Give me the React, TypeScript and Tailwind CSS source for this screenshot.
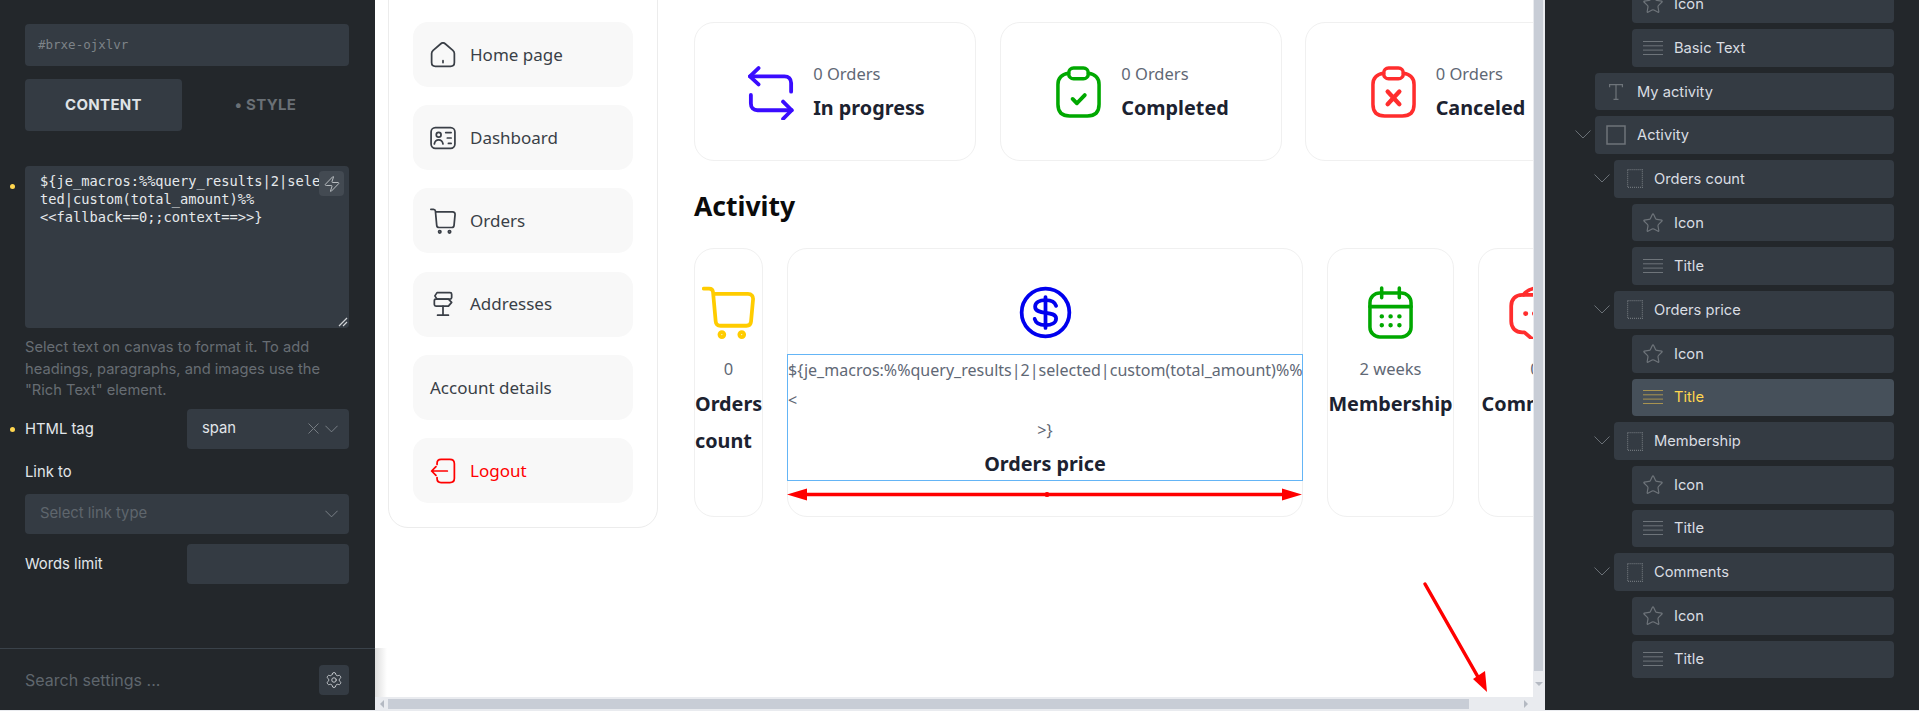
import React from 'react';
import { Settings, Star, Zap } from 'lucide-react';

const bodyFont = "font-['Noto_Sans',sans-serif]";
const panelFont = "font-['Inter',sans-serif]";
const monoFont = "font-['DejaVu_Sans_Mono',monospace]";

type IconProps = { className?: string };

const Svg: React.FC<{ className?: string; sw?: number; box?: string; children: React.ReactNode }> = ({ className, sw = 1.6, box = '0 0 24 24', children }) => (
    <svg viewBox={box} fill="none" stroke="currentColor" strokeWidth={sw} strokeLinecap="round" strokeLinejoin="round" className={className}>
        {children}
    </svg>
);

const HomeIcon = ({ className }: IconProps) => (
    <Svg className={className}>
        <path d="M1.5 10.5c0-1.200.5-2 1.400-2.800L10 1.600c1.200-1 2.800-1 4 0l7.100 6.100c.9.8 1.400 1.600 1.400 2.800V19c0 2.200-1.300 3.500-3.500 3.500H5c-2.200 0-3.500-1.300-3.500-3.500z" />
        <path d="M12 17.200v1.800" />
    </Svg>
);

const IdCardIcon = ({ className }: IconProps) => (
    <Svg className={className}>
        <rect x="1" y="2.500" width="22" height="19" rx="4" />
        <circle cx="8" cy="9" r="2.200" />
        <path d="M4 17.500c.5-2.500 2-3.700 4-3.700s3.500 1.200 4 3.700" />
        <path d="M14.500 7h5M16 12h3.500M17 17h2.500" />
    </Svg>
);

const CartIcon = ({ className, sw = 1.6 }: IconProps & { sw?: number }) => (
    <Svg className={className} sw={sw}>
        <path d="M.8 1.200h2.400c1 0 1.700.6 1.800 1.600l1.200 13.200c.1 1.300 1 2 2.200 2h11.700c1.200 0 2-.7 2.100-1.900l.9-9.800c.2-1.700-.7-2.700-2.300-2.700H5.200" />
        <circle cx="9" cy="22" r="1.100" />
        <circle cx="18" cy="22" r="1.100" />
    </Svg>
);

const SignpostIcon = ({ className }: IconProps) => (
    <Svg className={className}>
        <path d="M6.500 1.500H18.500c1 0 1.500.5 1.500 1.500v3c0 1-.5 1.500-1.500 1.500H6.500L4.500 4.500z" />
        <path d="M5.500 7.500h11.500l3 3-3 3.500H5.500c-1 0-1.500-.5-1.500-1.500V9c0-1 .5-1.500 1.500-1.500z" />
        <path d="M12 14v8M7 22.300h10" />
    </Svg>
);

const LogoutIcon = ({ className }: IconProps) => (
    <Svg className={className}>
        <path d="M6.500 6V5c0-2.300 1.500-3.700 3.700-3.700h8.100c2.400 0 4.200 1.500 4.200 4v13.400c0 2.500-1.800 4-4.200 4h-8.100c-2.200 0-3.700-1.400-3.700-3.700v-1" />
        <path d="M16 12H1.500M5.500 8l-4 4 4 4" />
    </Svg>
);

const RepeatIcon = ({ className }: IconProps) => (
    <Svg className={className} sw={2} box="0 0 24 28">
        <path d="M5.500 1 1 5.300l4.500 4.200" />
        <path d="M1 5.300h18c2.200 0 3.500 1.300 3.500 3.500v4.500" />
        <path d="M18.300 18.500l4.500 4.500-4.500 4.500" />
        <path d="M22.800 23H5c-2.200 0-3.500-1.300-3.500-3.500V15" />
    </Svg>
);

const ClipboardIcon = ({ className, children }: IconProps & { children: React.ReactNode }) => (
    <Svg className={className} sw={1.8} box="0 0 24 27">
        <path d="M7 3.700C3.400 4.200 1.500 6 1.500 9.500v10c0 4 2 6 6 6h9c4 0 6-2 6-6v-10c0-3.500-1.900-5.300-5.500-5.800" />
        <rect x="7" y="1" width="10" height="5.500" rx="2.500" />
        {children}
    </Svg>
);

const DollarIcon = ({ className }: IconProps) => (
    <Svg className={className} sw={1.7}>
        <circle cx="12" cy="12" r="10.800" />
        <path d="M16.800 9c-.5-1.700-2.300-2.600-4.800-2.600-2.800 0-4.700 1.100-4.700 3 0 4.200 9.500 1.300 9.500 5.300 0 1.900-2 3-4.800 3-2.700 0-4.400-1-4.900-2.800" />
        <path d="M12 5v14" />
    </Svg>
);

const CalendarIcon = ({ className }: IconProps) => (
    <Svg className={className} sw={1.8} box="0 0 24 27">
        <rect x="1.500" y="3.500" width="21" height="22.500" rx="5" />
        <path d="M1.500 10.500h21M7.500 1v5M16.500 1v5" />
        <path d="M7.500 15.500h.1M12 15.500h.1M16.500 15.500h.1M7.500 20h.1M12 20h.1M16.500 20h.1" strokeWidth={2.2} />
    </Svg>
);

const ChatIcon = ({ className }: IconProps) => (
    <Svg className={className} sw={1.7}>
        <path d="M6.500 4C8 2 10 1 13 1c3 0 5 1 6.500 3" />
        <path d="M6 4h12c3 0 5 2 5 5v7c0 3-2 5-5 5h-2l-3.500 2.500c-.9.6-1.800.6-2.700-.1L7 21H6c-3 0-5-2-5-5V9c0-3 2-5 5-5z" />
        <path d="M7.500 12.500h.1M11.500 12.500h.1M15.500 12.500h.1" strokeWidth={2.2} />
    </Svg>
);

const LinesIcon = ({ className }: IconProps) => (
    <svg viewBox="0 0 20 14" fill="none" stroke="currentColor" strokeWidth="1" className={className}>
        <path d="M0 .5h20M0 4.800h20M0 9.100h20M0 13.500h20" />
    </svg>
);

const DivIcon = ({ className }: IconProps) => (
    <svg viewBox="0 0 16 19" fill="none" stroke="currentColor" strokeWidth="1.2" strokeDasharray="1 1" className={className}>
        <rect x=".6" y=".6" width="14.800" height="17.800" />
    </svg>
);

const BoxIcon = ({ className }: IconProps) => (
    <svg viewBox="0 0 20 20" fill="none" stroke="currentColor" strokeWidth="1.5" className={className}>
        <rect x="1" y="1" width="18" height="18" />
    </svg>
);

const HeadingIcon = ({ className }: IconProps) => (
    <svg viewBox="0 0 14 16" fill="none" stroke="currentColor" strokeWidth="1.2" className={className}>
        <path d="M.6 3.200V.7h12.800v2.500M7 .7v14.600M4.500 15.300h5" />
    </svg>
);

const Chevron = ({ className }: IconProps) => (
    <svg viewBox="0 0 16 9" fill="none" stroke="currentColor" strokeWidth="1" className={className}>
        <path d="M.5.5 8 8l7.500-7.500" />
    </svg>
);

const Cross = ({ className }: IconProps) => (
    <svg viewBox="0 0 11 11" fill="none" stroke="currentColor" strokeWidth="1" className={className}>
        <path d="M.5.5l10 10M10.500.5l-10 10" />
    </svg>
);

const navItems = [
    { label: 'Home page', icon: HomeIcon },
    { label: 'Dashboard', icon: IdCardIcon },
    { label: 'Orders', icon: CartIcon },
    { label: 'Addresses', icon: SignpostIcon },
    { label: 'Account details' },
    { label: 'Logout', icon: LogoutIcon, danger: true },
];

const StatCard = ({ icon, title }: { icon: React.ReactNode; title: string }) => (
    <div className="w-[282px] h-[139px] shrink-0 flex items-center justify-center gap-[19px] pt-[2px] pl-[3px] bg-white border border-[#f0f0f0] rounded-[20px]">
        {icon}
        <div>
            <div className="text-[16.500px] leading-[30px] text-[#5f6875]">0 Orders</div>
            <div className="text-[19.800px] leading-[38px] font-bold text-[#1c2230]">{title}</div>
        </div>
    </div>
);

const ActivityCard = ({ width, icon, value, title }: { width: string; icon: React.ReactNode; value: string; title: string }) => (
    <div className={`${width} h-[269px] shrink-0 flex flex-col items-center pt-[37px] bg-white border border-[#f0f0f0] rounded-[20px]`}>
        {icon}
        <div className="mt-[14px] w-full text-center">
            <div className="text-[16.500px] leading-[32px] text-[#5f6875]">{value}</div>
            <div className="w-fit mx-auto text-left text-[19.800px] leading-[37px] font-bold text-[#1c2230]">{title}</div>
        </div>
    </div>
);

const structureTree = [
    { level: 3, icon: 'star', label: 'Icon' },
    { level: 3, icon: 'lines', label: 'Basic Text' },
    { level: 1, icon: 'heading', label: 'My activity' },
    { level: 1, icon: 'box', label: 'Activity', open: true },
    { level: 2, icon: 'div', label: 'Orders count', open: true },
    { level: 3, icon: 'star', label: 'Icon' },
    { level: 3, icon: 'lines', label: 'Title' },
    { level: 2, icon: 'div', label: 'Orders price', open: true },
    { level: 3, icon: 'star', label: 'Icon' },
    { level: 3, icon: 'lines', label: 'Title', active: true },
    { level: 2, icon: 'div', label: 'Membership', open: true },
    { level: 3, icon: 'star', label: 'Icon' },
    { level: 3, icon: 'lines', label: 'Title' },
    { level: 2, icon: 'div', label: 'Comments', open: true },
    { level: 3, icon: 'star', label: 'Icon' },
    { level: 3, icon: 'lines', label: 'Title' },
];

const treeIndent: Record<number, string> = { 1: 'pl-[50px]', 2: 'pl-[69px]', 3: 'pl-[87px]' };

const TreeIcon = ({ name }: { name: string }) => {
    if (name === 'star') return <Star size={22} strokeWidth={1.3} className="-mx-[1px] shrink-0" />;
    if (name === 'lines') return <LinesIcon className="w-[20px] h-[14px] shrink-0" />;
    if (name === 'heading') return <HeadingIcon className="w-[14px] h-[16px] mx-[3px] shrink-0" />;
    if (name === 'box') return <BoxIcon className="w-[20px] h-[20px] shrink-0" />;
    return <DivIcon className="w-[16px] h-[19px] ml-[2px] shrink-0" />;
};

const App: React.FC = () => {
    return (
        <div className={`relative w-[1919px] h-[711px] overflow-hidden flex bg-[#e9ebef] ${bodyFont}`}>
            {/* --- ELEMENT SETTINGS --- */}
            <aside className={`w-[375px] h-[710px] shrink-0 flex flex-col bg-[#23272b] ${panelFont}`}>
                <div className="flex-1 pl-[25px] pr-[26px] pt-[24px]">
                    <div className={`h-[42px] flex items-center px-[13px] rounded-[4px] bg-[#343b43] text-[12.500px] text-[#7d8388] ${monoFont}`}>#brxe-ojxlvr</div>
                    <div className="mt-[13px] flex text-[15px] font-bold tracking-[0.3px]">
                        <div className="w-[157px] h-[52px] flex items-center justify-center rounded-[4px] bg-[#343b43] text-[#dfe3e7]">CONTENT</div>
                        <div className="flex-1 h-[52px] flex items-center justify-center text-[#6a7076]">• STYLE</div>
                    </div>
                    <div className={`relative mt-[35px] h-[162px] rounded-[4px] bg-[#343b43] pl-[15px] pt-[6px] text-[13.700px] leading-[18px] text-[#e6e9ec] ${monoFont}`}>
                        <span className="absolute -left-[15px] top-[18px] w-[5px] h-[5px] rounded-full bg-[#ffd64f]" />
                        <div className="whitespace-nowrap">{'${je_macros:%%query_results|2|sele'}</div>
                        <div className="whitespace-nowrap">{'ted|custom(total_amount)%%'}</div>
                        <div className="whitespace-nowrap">{'<<fallback==0;;context==>>}'}</div>
                        <div className="absolute right-[5px] top-[5px] w-[25px] h-[25px] flex items-center justify-center rounded-[4px] bg-[#434a52] text-[#c5c9cd]">
                            <Zap size={18} strokeWidth={1.2} />
                        </div>
                        <svg viewBox="0 0 10 10" className="absolute right-[1px] bottom-[1px] w-[10px] h-[10px]" stroke="#d0d3d6" strokeWidth="1.2">
                            <path d="M1 9l8-8M5 9l4-4" />
                        </svg>
                    </div>
                    <p className="mt-[9px] w-[310px] text-[14.700px] leading-[21.500px] text-[#676d73]">
                        Select text on canvas to format it. To add headings, paragraphs, and images use the "Rich Text" element.
                    </p>
                    <div className="relative mt-[7px] flex items-center justify-between text-[14.800px] text-[#e2e6ea]">
                        <span className="absolute -left-[15px] top-[18px] w-[5px] h-[5px] rounded-full bg-[#ffd64f]" />
                        <span className="pt-[1px]">HTML tag</span>
                        <div className="w-[162px] h-[40px] flex items-center pl-[15px] pr-[11px] rounded-[4px] bg-[#343b43]">
                            <span className="flex-1">span</span>
                            <Cross className="w-[11px] h-[11px] text-[#767c82]" />
                            <Chevron className="ml-[6px] w-[13px] h-[8px] text-[#8a9096]" />
                        </div>
                    </div>
                    <div className="mt-[13px] h-[21px] flex items-center text-[14.800px] text-[#e2e6ea]">Link to</div>
                    <div className="mt-[11px] h-[40px] flex items-center justify-between pl-[15px] pr-[11px] rounded-[4px] bg-[#343b43] text-[14.800px] text-[#5f666d]">
                        <span>Select link type</span>
                        <Chevron className="w-[13px] h-[8px] text-[#8a9096]" />
                    </div>
                    <div className="mt-[10px] flex items-center justify-between text-[14.800px] text-[#e2e6ea]">
                        <span className="pt-[1px]">Words limit</span>
                        <div className="w-[162px] h-[40px] rounded-[4px] bg-[#343b43]" />
                    </div>
                </div>
                <div className="h-[62px] flex items-center justify-between pl-[25px] pr-[26px] border-t border-[#3a424a] text-[16px] text-[#5f666d]">
                    <span>Search settings ...</span>
                    <div className="w-[30px] h-[30px] flex items-center justify-center rounded-[4px] bg-[#343b43] text-[#cfd3d7]">
                        <Settings size={18} strokeWidth={1.2} />
                    </div>
                </div>
            </aside>

            {/* --- CANVAS --- */}
            <main className="flex-1 min-w-0 flex flex-col bg-white">
                <div className="flex-1 min-h-0 flex">
                    <div className="flex-1 min-w-0 overflow-hidden flex gap-[36px] pl-[13px]">
                        {/* Account nav */}
                        <nav className="-mt-[30px] w-[270px] h-[558px] shrink-0 flex flex-col justify-end gap-[18.200px] px-[24px] pb-[24px] bg-white border border-[#ececec] rounded-[20px]">
                            {navItems.map(item => {
                                const Icon = item.icon;
                                return (
                                    <div key={item.label} className={`h-[65px] shrink-0 flex items-center gap-[14px] pl-[17px] rounded-[15px] bg-[#f8f8f8] text-[17px] ${item.danger ? 'text-[#ff0000]' : 'text-[#3a3f47]'}`}>
                                        {Icon && <Icon className="w-[26px] h-[26px]" />}
                                        <span>{item.label}</span>
                                    </div>
                                );
                            })}
                        </nav>

                        <div className="pt-[22px] shrink-0">
                            <div className="flex gap-[23.500px]">
                                <StatCard title="In progress" icon={<RepeatIcon className="w-[46px] h-[54px] text-[#3a0cff]" />} />
                                <StatCard
                                    title="Completed"
                                    icon={<ClipboardIcon className="w-[47px] h-[53px] text-[#00a800]"><path d="M9 16.800l2.200 2.200 4-4.200" strokeWidth={2} /></ClipboardIcon>}
                                />
                                <StatCard
                                    title="Canceled"
                                    icon={<ClipboardIcon className="w-[47px] h-[53px] text-[#ff2d2d]"><path d="M9 13l6 6.500M15 13l-6 6.500" strokeWidth={2.2} /></ClipboardIcon>}
                                />
                            </div>

                            <h2 className="mt-[24px] text-[26.500px] leading-[42px] font-bold text-[#0b0b0b]">Activity</h2>

                            <div className="mt-[21px] flex gap-[24px]">
                                <ActivityCard width="w-[69px]" value="0" title="Orders count" icon={<CartIcon sw={1.7} className="w-[53px] h-[53px] text-[#ffcc00]" />} />
                                {/* selected element */}
                                <div className="w-[516px] h-[269px] shrink-0 flex flex-col items-center pt-[37px] bg-white border border-[#f0f0f0] rounded-[20px]">
                                    <DollarIcon className="w-[53px] h-[53px] text-[#0000ee]" />
                                    <div className="mt-[15px] w-[calc(100%+2px)] h-[127px] border border-[#64b5f6] text-center">
                                        <div className="text-[16.050px] leading-[30px] text-[#5f6875]">
                                            <div className="whitespace-nowrap text-left">{'${je_macros:%%query_results|2|selected|custom(total_amount)%%'}</div>
                                            <div className="text-left">{'<'}</div>
                                            <div>{'>}'}</div>
                                        </div>
                                        <div className="text-[19.800px] leading-[37px] font-bold text-[#1c2230]">Orders price</div>
                                    </div>
                                </div>
                                <ActivityCard width="w-[127px]" value="2 weeks" title="Membership" icon={<CalendarIcon className="w-[47px] h-[53px] text-[#00a800]" />} />
                                <ActivityCard width="w-[114px]" value="0" title="Comments" icon={<ChatIcon className="w-[53px] h-[53px] text-[#ff2d2d]" />} />
                            </div>
                        </div>
                    </div>

                    {/* vertical scrollbar */}
                    <div className="w-[12px] shrink-0 bg-[#e9ebef] pl-[1px] pr-[2px] flex flex-col">
                        <div className="h-[671px] bg-[#c8cdd6]" />
                        <div className="flex-1 flex items-center justify-center">
                            <span className="border-x-[4px] border-x-transparent border-t-[4px] border-t-[#b4b9c2]" />
                        </div>
                    </div>
                </div>
                {/* horizontal scrollbar */}
                <div className="h-[14px] shrink-0 flex items-center bg-[#e9ebef] pl-[5px] pr-[17px]">
                    <span className="border-y-[4px] border-y-transparent border-r-[4px] border-r-[#b4b9c2] mr-[4px]" />
                    <div className="w-[1081px] h-[10px] bg-[#c8cdd6]" />
                    <div className="flex-1" />
                    <span className="border-y-[4px] border-y-transparent border-l-[4px] border-l-[#b4b9c2]" />
                </div>
            </main>

            {/* --- STRUCTURE --- */}
            <aside className={`w-[374px] h-[725px] shrink-0 overflow-hidden flex flex-col gap-[6px] pr-[25px] -mt-[14.700px] bg-[#23272b] ${panelFont}`}>
                {structureTree.map((row, i) => (
                    <div key={i} className={`relative h-[37.700px] shrink-0 ${treeIndent[row.level]}`}>
                        {row.open && (
                            <Chevron className="absolute top-[14px] -ml-[20px] w-[16px] h-[9px] text-[#6a7076]" />
                        )}
                        <div className={`h-full flex items-center gap-[11px] pl-[11px] rounded-[4px] text-[14.700px] ${row.active ? 'bg-[#46505a] text-[#ffd64f]' : 'bg-[#343b43] text-[#d9dde2]'}`}>
                            <span className={`flex ${row.active ? 'text-[#a89350]' : 'text-[#6e747a]'}`}>
                                <TreeIcon name={row.icon} />
                            </span>
                            <span>{row.label}</span>
                        </div>
                    </div>
                ))}
            </aside>

            {/* shadow the search bar throws on the canvas */}
            <div className="absolute left-[375px] top-[648px] w-[12px] h-[49px] bg-gradient-to-r from-[#dedede] to-transparent" />

            {/* annotation arrows over the page */}
            <svg viewBox="0 0 1919 711" className="absolute inset-0 w-[1919px] h-[711px] pointer-events-none">
                <path d="M800 494.500H1290" stroke="#ff0000" strokeWidth="3.5" />
                <circle cx="1047" cy="494.500" r="2.500" fill="#ff0000" />
                <path d="M787 494.500l20-6v12zM1302 494.500l-20-6v12z" fill="#ff0000" />
                <path d="M1425 584L1478 677" stroke="#ff0000" strokeWidth="3.5" strokeLinecap="round" />
                <path d="M1487 692l-14-13 12-8z" fill="#ff0000" />
            </svg>
        </div>
    );
};

export default App;
